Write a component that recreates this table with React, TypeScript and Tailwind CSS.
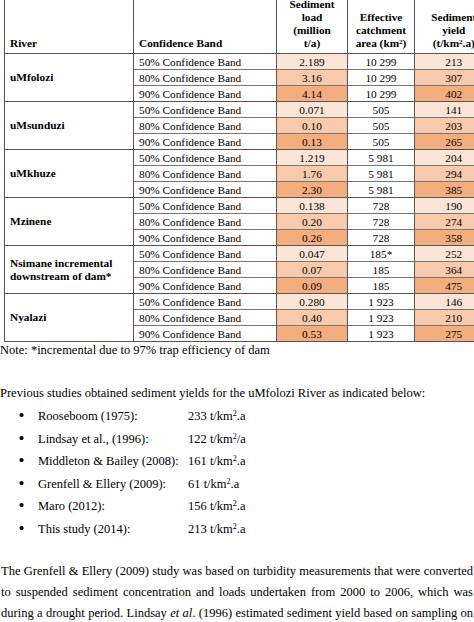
const rivers = [
  { name: ["uMfolozi"], rows: [["2.189", "10 299", "213"], ["3.16", "10 299", "307"], ["4.14", "10 299", "402"]] },
  { name: ["uMsunduzi"], rows: [["0.071", "505", "141"], ["0.10", "505", "203"], ["0.13", "505", "265"]] },
  { name: ["uMkhuze"], rows: [["1.219", "5 981", "204"], ["1.76", "5 981", "294"], ["2.30", "5 981", "385"]] },
  { name: ["Mzinene"], rows: [["0.138", "728", "190"], ["0.20", "728", "274"], ["0.26", "728", "358"]] },
  {
    name: ["Nsimane incremental", "downstream of dam*"],
    rows: [["0.047", "185*", "252"], ["0.07", "185", "364"], ["0.09", "185", "475"]],
  },
  { name: ["Nyalazi"], rows: [["0.280", "1 923", "146"], ["0.40", "1 923", "210"], ["0.53", "1 923", "275"]] },
];

const bands = ["50% Confidence Band", "80% Confidence Band", "90% Confidence Band"];
const shades = ["bg-[#fce5d7]", "bg-[#f8c9aa]", "bg-[#f3ad7e]"];

const studies = [
  { who: "Rooseboom (1975):", val: "233", unit: ".a" },
  { who: "Lindsay et al., (1996):", val: "122", unit: "/a" },
  { who: "Middleton & Bailey (2008):", val: "161", unit: ".a" },
  { who: "Grenfell & Ellery (2009):", val: "61", unit: ".a" },
  { who: "Maro (2012):", val: "156", unit: ".a" },
  { who: "This study (2014):", val: "213", unit: ".a" },
];

function Km2() {
  return (
    <>
      km<sup className="text-[7px]">2</sup>
    </>
  );
}

export default function App() {
  return (
    <div
      className="h-[622px] w-[474px] overflow-hidden bg-white text-black"
      style={{ fontFamily: '"Liberation Serif", "Times New Roman", serif' }}
    >
      <div className="-mt-[2px] pl-[4px]">
        <table className="w-[488px] table-fixed border-collapse text-[11.3px] leading-[14px]">
          <colgroup>
            <col className="w-[129px]" />
            <col className="w-[143px]" />
            <col className="w-[71px]" />
            <col className="w-[67px]" />
            <col className="w-[78px]" />
          </colgroup>
          <thead>
            <tr className="border-b border-[#555] font-bold leading-[13px]">
              <th className="border-l border-[#555] px-[5px] pt-0 pb-[3px] text-left align-bottom">River</th>
              <th className="border-l border-[#555] px-[5px] pt-0 pb-[3px] text-left align-bottom">Confidence Band</th>
              <th className="border-l border-[#555] px-[2px] pt-0 pb-[3px] align-bottom">
                <div>Sediment</div>
                <div>load</div>
                <div>(million</div>
                <div>t/a)</div>
              </th>
              <th className="border-l border-[#555] px-[2px] pt-0 pb-[3px] align-bottom">
                <div>Effective</div>
                <div>catchment</div>
                <div>
                  area (<Km2 />)
                </div>
              </th>
              <th className="border-l border-[#555] px-[2px] pt-0 pb-[3px] align-bottom">
                <div>Sediment</div>
                <div>yield</div>
                <div>
                  (t/<Km2 />.a)
                </div>
              </th>
            </tr>
          </thead>
          <tbody>
            {rivers.map((r) =>
              r.rows.map((row, i) => (
                <tr key={r.name[0] + i} className={i === 2 ? "h-[16px] border-b border-[#555]" : "h-[16px] border-b border-[#777]"}>
                  {i === 0 && (
                    <td rowSpan={3} className="border-l border-[#555] px-[5px] align-middle font-bold leading-[13px]">
                      {r.name.map((n) => (
                        <div key={n}>{n}</div>
                      ))}
                    </td>
                  )}
                  <td className="border-l border-[#555] px-[5px] py-0">{bands[i]}</td>
                  <td className={`border-l border-[#555] py-0 text-center ${shades[i]}`}>{row[0]}</td>
                  <td className="border-l border-[#555] py-0 text-center">{row[1]}</td>
                  <td className={`border-l border-[#555] py-0 text-center ${shades[i]}`}>{row[2]}</td>
                </tr>
              ))
            )}
          </tbody>
        </table>
      </div>
      <p className="text-[12.5px] leading-[16px]">Note: *incremental due to 97% trap efficiency of dam</p>

      <p className="mt-[27px] text-[12.5px] leading-[16px]">
        Previous studies obtained sediment yields for the uMfolozi River as indicated below:
      </p>
      <ul className="mt-[6px] flex flex-col gap-[4.6px] text-[12.5px] leading-[18px]">
        {studies.map((s) => (
          <li key={s.who} className="flex">
            <span className="w-[38px] pl-[18.5px] text-[17px] leading-[18px]">•</span>
            <span className="w-[150px]">{s.who}</span>
            <span>
              {s.val} t/km<sup className="text-[8px]">2</sup>
              {s.unit}
            </span>
          </li>
        ))}
      </ul>

      <div className="mt-[23px] w-[473px] pl-[1px] text-[12.5px] leading-[21px]">
        <p className="text-justify [text-align-last:justify]">
          The Grenfell &amp; Ellery (2009) study was based on turbidity measurements that were converted
        </p>
        <p className="text-justify [text-align-last:justify]">
          to suspended sediment concentration and loads undertaken from 2000 to 2006, which was
        </p>
        <p className="text-justify [text-align-last:justify]">
          during a drought period. Lindsay <i>et al</i>. (1996) estimated sediment yield based on sampling on
        </p>
      </div>
    </div>
  );
}
